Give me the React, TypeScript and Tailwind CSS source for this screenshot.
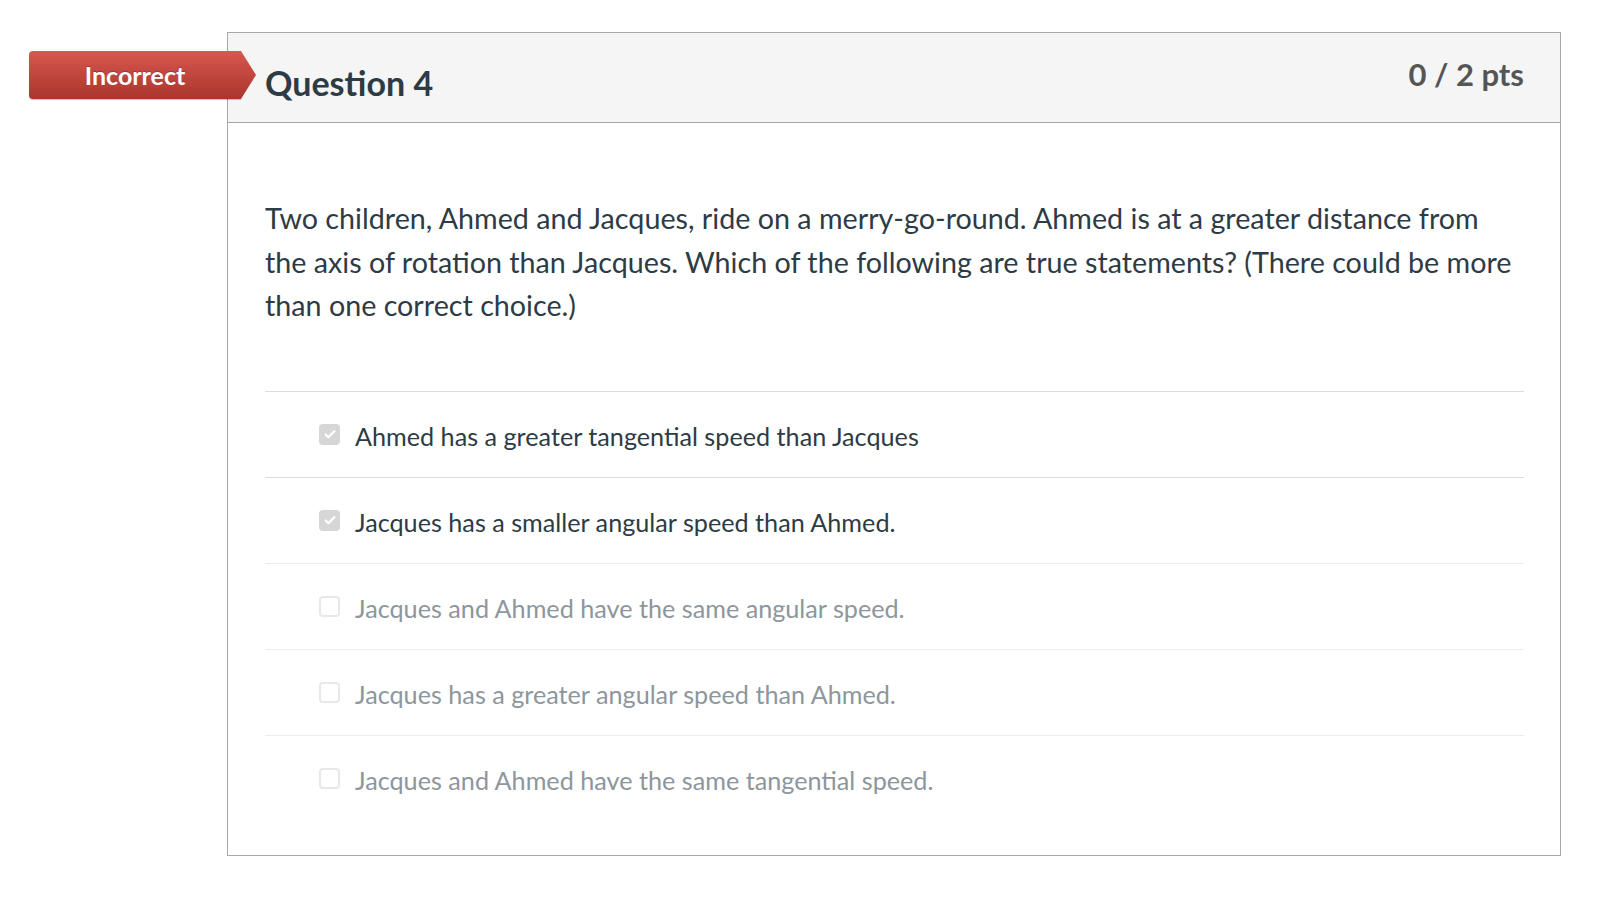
import React from "react";

type Answer = {
  id: string;
  text: string;
  selected: boolean;
};

const answers: Answer[] = [
  { id: "a1", text: "Ahmed has a greater tangential speed than Jacques", selected: true },
  { id: "a2", text: "Jacques has a smaller angular speed than Ahmed.", selected: true },
  { id: "a3", text: "Jacques and Ahmed have the same angular speed.", selected: false },
  { id: "a4", text: "Jacques has a greater angular speed than Ahmed.", selected: false },
  { id: "a5", text: "Jacques and Ahmed have the same tangential speed.", selected: false },
];

const Checkbox = ({ checked }: { checked: boolean }) =>
  checked ? (
    <span className="flex h-[21px] w-[21px] shrink-0 items-center justify-center rounded-[4px] bg-[#d6d6d6]">
      <svg width="14" height="14" viewBox="0 0 16 16" fill="none">
        <path
          d="M3 8.5l3.2 3.2L13 4.8"
          stroke="#ffffff"
          strokeWidth="2.6"
          strokeLinecap="round"
          strokeLinejoin="round"
        />
      </svg>
    </span>
  ) : (
    <span className="h-[21px] w-[21px] shrink-0 rounded-[4px] border-2 border-[#e8e8e8] bg-white" />
  );

const IncorrectBadge = () => (
  <div className="absolute left-[-199px] top-[18px] flex h-[48px]">
    <div className="flex w-[212px] items-center justify-center rounded-l-[4px] bg-gradient-to-b from-[#d9574f] to-[#a9362d] shadow-[0_1px_1px_rgba(0,0,0,0.25)]">
      <span className="text-[25px] font-bold leading-none text-white [text-shadow:0_-1px_0_rgba(0,0,0,0.25)]">
        Incorrect
      </span>
    </div>
    <div className="w-[15px] bg-gradient-to-b from-[#d9574f] to-[#a9362d] [clip-path:polygon(0_0,100%_50%,0_100%)]" />
  </div>
);

export default function App() {
  return (
    <div className="min-h-[906px] bg-white pt-[32px] font-['Lato',sans-serif] text-[#2d3b45]">
      <div className="relative ml-[227px] w-[1334px] border border-[#a8a8a8]">
        <IncorrectBadge />

        <div className="flex h-[90px] items-start justify-between border-b border-[#a8a8a8] bg-[#f5f5f5] pl-[37px] pr-[36px] pt-[23px]">
          <h2 className="mt-[7px] text-[34px] font-bold leading-[1.2] text-[#2d3b45]">
            Question 4
          </h2>
          <div className="text-[31px] font-bold leading-[1.2] text-[#555555]">
            0 / 2 pts
          </div>
        </div>

        <div className="pl-[37px] pr-[36px] pb-[34px] pt-[74px]">
          <p className="mr-[6px] text-[28.7px] leading-[43.5px]">
            Two children, Ahmed and Jacques, ride on a merry-go-round. Ahmed is at a greater
            distance from the axis of rotation than Jacques. Which of the following are true
            statements? (There could be more than one correct choice.)
          </p>

          <div className="mt-[63px]">
            {answers.map((a, i) => (
              <div
                key={a.id}
                className={`flex h-[86px] items-center gap-[15px] border-t pl-[54px] ${
                  i < 2 ? "border-[#dcdcdc]" : "border-[#ececec]"
                }`}
              >
                <Checkbox checked={a.selected} />
                <span
                  className={`pt-[5px] text-[25.2px] leading-[1.2] ${
                    a.selected ? "text-[#2d3b45]" : "text-[#8d969c]"
                  }`}
                >
                  {a.text}
                </span>
              </div>
            ))}
          </div>
        </div>
      </div>
    </div>
  );
}
